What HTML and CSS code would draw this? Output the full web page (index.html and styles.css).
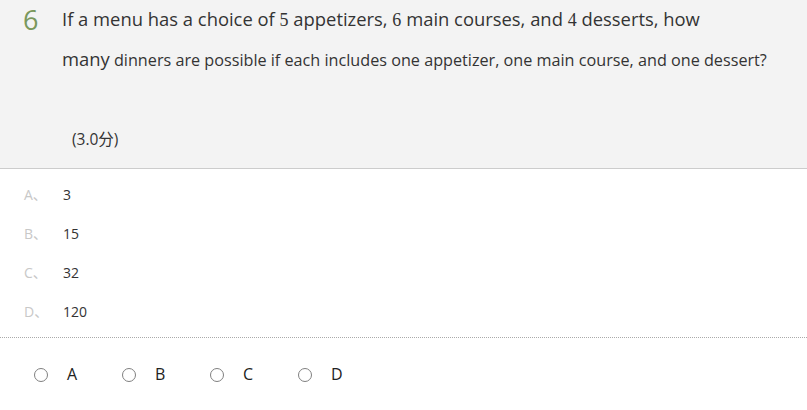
FILE: index.html
```html
<!DOCTYPE html>
<html>
<head>
<meta charset="utf-8">
<link rel="stylesheet" href="styles.css">
</head>
<body>
<div class="question">
  <div class="qnum">6</div>
  <div class="qbody">
    <div class="qtext"><span class="big">If a menu has a choice of <span class="num">5</span> appetizers, <span class="num">6</span> main courses, and <span class="num">4</span> desserts, how<br>many</span> dinners are possible if each includes one appetizer, one main course, and one dessert?</div>
    <div class="score">(3.0分)</div>
  </div>
</div>
<ul class="options">
  <li><span class="letter">A、</span><span class="val">3</span></li>
  <li><span class="letter">B、</span><span class="val">15</span></li>
  <li><span class="letter">C、</span><span class="val">32</span></li>
  <li><span class="letter">D、</span><span class="val">120</span></li>
</ul>
<div class="answers">
  <label class="ans"><span class="radio"></span><span class="alabel">A</span></label>
  <label class="ans"><span class="radio"></span><span class="alabel">B</span></label>
  <label class="ans"><span class="radio"></span><span class="alabel">C</span></label>
  <label class="ans"><span class="radio"></span><span class="alabel">D</span></label>
</div>
</body>
</html>
```
FILE: styles.css
```css
html, body {
  margin: 0;
  padding: 0;
  background: #fff;
  font-family: "Open Sans", "Noto Sans", "Noto Sans CJK SC", sans-serif;
  color: #333;
}
.question {
  display: flex;
  background: #f3f3f3;
  border-bottom: 1px solid #cccccc;
  height: 169px;
  box-sizing: border-box;
}
.qnum {
  width: 39px;
  padding-left: 23px;
  font-size: 27px;
  line-height: 40px;
  color: #7a985c;
}
.qbody {
  flex: 1;
}
.qtext {
  font-size: 16.2px;
  line-height: 40px;
  color: #333;
}
.qtext .big {
  font-size: 18.4px;
  line-height: 1;
}
.qtext .num {
  font-family: "Liberation Serif", serif;
  font-size: 18px;
}
.score {
  margin-top: 39px;
  margin-left: 10px;
  font-size: 15.5px;
  line-height: 40px;
  color: #333;
}
.options {
  list-style: none;
  margin: 0;
  padding: 6px 0 6px 0;
  border-bottom: 1px dotted #aaa;
}
.options li {
  display: flex;
  height: 39px;
  line-height: 39px;
  font-size: 14px;
}
.letter {
  width: 39px;
  padding-left: 24px;
  color: #c8c8c8;
}
.val {
  color: #333;
}
.answers {
  display: flex;
  align-items: center;
  height: 72px;
  padding-left: 34px;
}
.ans {
  display: flex;
  align-items: center;
  width: 88px;
}
.radio {
  width: 12px;
  height: 12px;
  border: 1px solid #808080;
  border-radius: 50%;
  margin-right: 19px;
  margin-top: 2px;
}
.alabel {
  font-size: 16px;
  color: #222;
}
```
